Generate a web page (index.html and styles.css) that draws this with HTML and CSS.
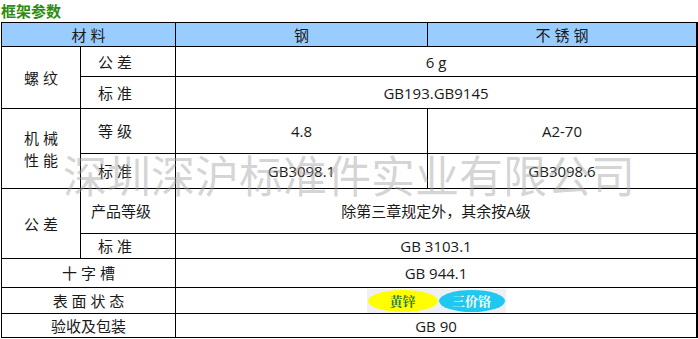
FILE: index.html
```html
<!DOCTYPE html>
<html lang="zh">
<head>
<meta charset="utf-8">
<link rel="stylesheet" href="styles.css">
</head>
<body>
<div class="page">
  <div class="title">框架参数</div>
  <div class="spec">
    <div class="cell head span2">材 料</div>
    <div class="cell head">钢</div>
    <div class="cell head">不 锈 钢</div>

    <div class="cell rspan2">螺 纹</div>
    <div class="cell sub">公 差</div>
    <div class="cell span2">6 g</div>
    <div class="cell sub">标 准</div>
    <div class="cell span2">GB193.GB9145</div>

    <div class="cell rspan2 grp">机 械<br>性 能</div>
    <div class="cell sub">等 级</div>
    <div class="cell">4.8</div>
    <div class="cell">A2-70</div>
    <div class="cell sub">标 准</div>
    <div class="cell">GB3098.1</div>
    <div class="cell">GB3098.6</div>

    <div class="cell rspan2">公 差</div>
    <div class="cell sub sub-tight">产品等级</div>
    <div class="cell span2">除第三章规定外，其余按A级</div>
    <div class="cell sub">标 准</div>
    <div class="cell span2">GB 3103.1</div>

    <div class="cell span2">十 字 槽</div>
    <div class="cell span2">GB 944.1</div>

    <div class="cell span2">表 面 状 态</div>
    <div class="cell span2">
      <span class="badges"><span class="badge yellow">黄锌</span><span class="badge cyan">三价铬</span></span>
    </div>

    <div class="cell span2">验收及包装</div>
    <div class="cell span2">GB 90</div>
  </div>
  <div class="watermark">深圳深沪标准件实业有限公司</div>
</div>
</body>
</html>
```

FILE: styles.css
```css
html, body {
  margin: 0;
  padding: 0;
  background: #fff;
}
.page {
  position: relative;
  width: 698px;
  height: 339px;
  overflow: hidden;
  font-family: "Open Sans", "Noto Sans CJK SC", sans-serif;
  color: #1a1a1a;
}
.title {
  height: 22px;
  line-height: 22px;
  padding-left: 1px;
  font-family: "Noto Sans CJK SC", sans-serif;
  font-weight: bold;
  font-size: 15px;
  color: #2e8b10;
}
.spec {
  margin-left: 1px;
  width: 697px;
  box-sizing: border-box;
  display: grid;
  grid-template-columns: 78px 94px 251px 268px;
  grid-template-rows: 23px 29px 31px 44px 34px 44px 24px 28px 25px 23px;
  gap: 1px;
  padding: 1px 2px 1px 1px;
  background: #000;
  font-size: 15px;
}
.cell {
  background: #fff;
  display: flex;
  align-items: center;
  justify-content: center;
  line-height: 18px;
  white-space: nowrap;
  text-align: center;
}
.cell.head {
  background: #99ccff;
}
.span2 {
  grid-column: span 2;
}
.rspan2 {
  grid-row: span 2;
}
.grp {
  line-height: 22px;
}
.cell.sub {
  justify-content: flex-start;
  padding-left: 17px;
}
.cell.sub-tight {
  padding-left: 10px;
}
.badges {
  display: inline-flex;
  background: #eef0f6;
  padding: 1px;
  gap: 1px;
}
.badge {
  display: inline-block;
  height: 22px;
  line-height: 22px;
  border-radius: 50%;
  font-family: "Noto Serif CJK SC", "Noto Sans CJK SC", serif;
  font-weight: bold;
  font-size: 13px;
  text-align: center;
}
.yellow {
  width: 70px;
  background: #ffff00;
  color: #2a7a3a;
}
.cyan {
  width: 66px;
  background: #1ec8ef;
  color: #ffffff;
}
.watermark {
  position: absolute;
  left: 63px;
  top: 146px;
  font-family: "Noto Sans CJK SC", sans-serif;
  font-size: 44px;
  line-height: 56px;
  color: rgba(160, 160, 160, 0.45);
  pointer-events: none;
  white-space: nowrap;
}
```
